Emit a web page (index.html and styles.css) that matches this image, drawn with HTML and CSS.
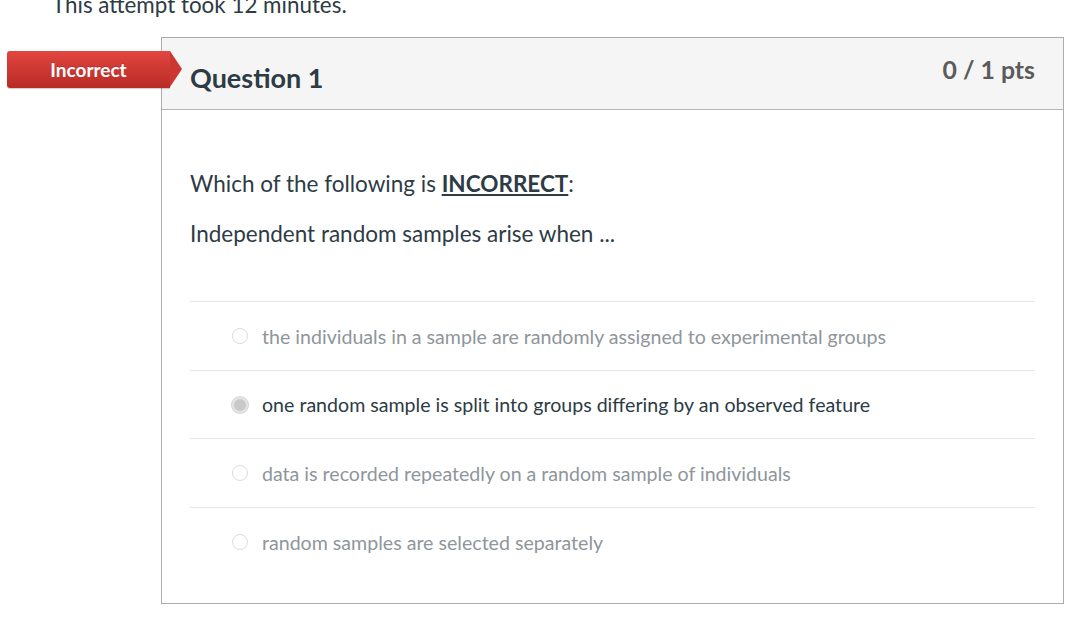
FILE: index.html
```html
<!DOCTYPE html>
<html>
<head>
<meta charset="utf-8">
<link rel="stylesheet" href="styles.css">
</head>
<body>
<p class="attempt">This attempt took 12 minutes.</p>
<div class="question-area">
  <div class="badge">Incorrect</div>
  <div class="card">
    <div class="card-header">
      <h2 class="q-title">Question 1</h2>
      <div class="pts">0 / 1 pts</div>
    </div>
    <div class="card-body">
      <p class="q-text">Which of the following is <strong class="u">INCORRECT</strong>:</p>
      <p class="q-text">Independent random samples arise when ...</p>
      <div class="answers">
        <div class="answer muted"><span class="radio"></span><span>the individuals in a sample are randomly assigned to experimental groups</span></div>
        <div class="answer selected"><span class="radio on"></span><span>one random sample is split into groups differing by an observed feature</span></div>
        <div class="answer muted"><span class="radio"></span><span>data is recorded repeatedly on a random sample of individuals</span></div>
        <div class="answer muted"><span class="radio"></span><span>random samples are selected separately</span></div>
      </div>
    </div>
  </div>
</div>
</body>
</html>
```
FILE: styles.css
```css
html, body {
  margin: 0;
  padding: 0;
  background: #fff;
  font-family: Lato, "Liberation Sans", sans-serif;
  color: #2d3b45;
}
.attempt {
  margin: -8px 0 0 52px;
  font-size: 22.4px;
  line-height: 26px;
  height: 26px;
}
.question-area {
  position: relative;
  margin: 19px 0 0 161px;
  width: 903px;
}
.badge {
  position: absolute;
  left: -154px;
  top: 14px;
  width: 163px;
  height: 37px;
  box-sizing: border-box;
  padding-right: 0;
  background: linear-gradient(#e2463f, #b82a26);
  border-radius: 3px 0 0 3px;
  color: #fff;
  font-weight: bold;
  font-size: 19px;
  line-height: 37px;
  text-align: center;
  text-shadow: 0 -1px 0 rgba(0,0,0,0.15);
  box-shadow: 0 1px 1px rgba(0,0,0,0.2);
  z-index: 2;
}
.badge::after {
  content: "";
  position: absolute;
  right: -12px;
  top: 0;
  border-top: 18.5px solid transparent;
  border-bottom: 18.5px solid transparent;
  border-left: 12px solid #cc3732;
}
.card {
  border: 1px solid #acacac;
  box-sizing: border-box;
  height: 567px;
}
.card-header {
  display: flex;
  justify-content: space-between;
  align-items: flex-start;
  background: #f5f5f5;
  border-bottom: 1px solid #b4b4b4;
  height: 71px;
  padding: 0 28px;
}
.q-title {
  margin: 25px 0 0 0;
  font-size: 27px;
  font-weight: bold;
  line-height: 30px;
}
.pts {
  margin-top: 18px;
  font-size: 24.8px;
  font-weight: bold;
  color: #5b5b5b;
  line-height: 28px;
}
.card-body {
  padding: 61px 28px 0 28px;
}
.q-text {
  margin: 0 0 24px 0;
  font-size: 22.5px;
  line-height: 26px;
}
.u {
  text-decoration: underline;
}
.answers {
  margin-top: 54px;
}
.answer {
  display: flex;
  align-items: center;
  gap: 14px;
  border-top: 1px solid #e6e6e6;
  height: 66.6px;
  padding-left: 42px;
  padding-top: 1px;
  font-size: 19.6px;
}
.answer.muted {
  color: #8e969c;
}
.answer.selected {
  color: #2d3b45;
}
.radio {
  width: 16px;
  height: 16px;
  flex: none;
  border-radius: 50%;
  border: 1px solid #dcdcdc;
  background: #fff;
  box-sizing: border-box;
}
.radio.on {
  background: #c8c8c8;
  border: 2px solid #e4e4e4;
  box-shadow: 0 0 0 1px #d6d6d6;
}
```
